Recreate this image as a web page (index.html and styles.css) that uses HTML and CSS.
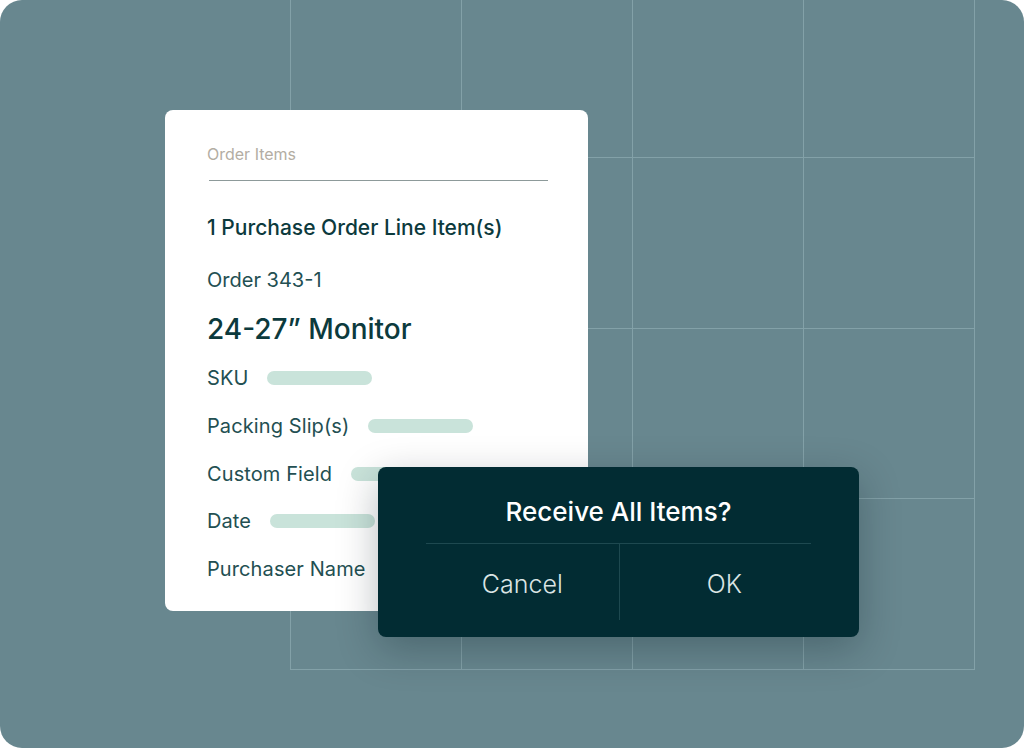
FILE: index.html
```html
<!DOCTYPE html>
<html lang="en">
<head>
<meta charset="utf-8">
<title>Receive All Items</title>
<link rel="stylesheet" href="styles.css">
</head>
<body>
<div class="frame">
  <div class="grid">
    <div class="cell"></div><div class="cell"></div><div class="cell"></div><div class="cell"></div>
    <div class="cell"></div><div class="cell"></div><div class="cell"></div><div class="cell"></div>
    <div class="cell"></div><div class="cell"></div><div class="cell"></div><div class="cell"></div>
    <div class="cell"></div><div class="cell"></div><div class="cell"></div><div class="cell"></div>
  </div>

  <div class="card">
    <div class="card-head">Order Items</div>
    <div class="card-count">1 Purchase Order Line Item(s)</div>
    <div class="card-order">Order 343-1</div>
    <div class="card-title">24-27” Monitor</div>
    <div class="fields">
      <div class="field"><span>SKU</span><span class="pill"></span></div>
      <div class="field"><span>Packing Slip(s)</span><span class="pill"></span></div>
      <div class="field"><span>Custom Field</span><span class="pill"></span></div>
      <div class="field"><span>Date</span><span class="pill"></span></div>
      <div class="field"><span>Purchaser Name</span><span class="pill"></span></div>
    </div>
  </div>

  <div class="dialog">
    <div class="dialog-title">Receive All Items?</div>
    <div class="dialog-actions">
      <div class="action">Cancel</div>
      <div class="action action-ok">OK</div>
    </div>
  </div>
</div>
</body>
</html>
```

FILE: styles.css
```css
* { box-sizing: border-box; }
html, body { margin: 0; padding: 0; background: #ffffff; }
body { font-family: Inter, "Noto Sans", sans-serif; }

.frame {
  position: relative;
  width: 1024px;
  height: 748px;
  background: #68878f;
  border-radius: 22px;
  overflow: hidden;
}

.grid {
  position: absolute;
  left: 290px;
  top: -13px;
  width: 685px;
  height: 683px;
  display: grid;
  grid-template-columns: repeat(4, 1fr);
  grid-template-rows: repeat(4, 1fr);
  border-left: 1px solid #83a1a8;
}
.cell {
  border-right: 1px solid #83a1a8;
  border-bottom: 1px solid #83a1a8;
}

.card {
  position: absolute;
  left: 165px;
  top: 110px;
  width: 423px;
  height: 501px;
  background: #ffffff;
  border-radius: 8px;
  padding: 34px 40px 30px 42px;
  display: flex;
  flex-direction: column;
  color: #234f52;
}
.card-head {
  font-size: 16px;
  line-height: 20px;
  color: #b3ada3;
  padding-bottom: 16px;
  border-bottom: 1px solid #8d9a9a;
  margin-left: 2px;
  text-indent: -2px;
}
.card-count {
  margin-top: 34px;
  font-size: 21px;
  line-height: 26px;
  font-weight: 500;
  color: #0c3a3d;
}
.card-order {
  margin-top: 26px;
  font-size: 20px;
  line-height: 26px;
}
.card-title {
  margin-top: 18px;
  font-size: 28px;
  line-height: 36px;
  font-weight: 500;
  color: #0c3a3d;
}
.fields {
  margin-top: 18px;
  display: flex;
  flex-direction: column;
  gap: 21.75px;
}
.field {
  display: flex;
  align-items: center;
  gap: 19px;
  font-size: 20px;
  line-height: 26px;
  letter-spacing: 0.1px;
}
.pill {
  width: 105px;
  height: 14px;
  border-radius: 7px;
  background: #c9e3da;
}

.dialog {
  position: absolute;
  left: 378px;
  top: 467px;
  width: 481px;
  height: 170px;
  background: #022c33;
  border-radius: 8px;
  box-shadow: 0 12px 40px rgba(0, 20, 30, 0.28);
  padding: 29px 48px 17px;
  display: flex;
  flex-direction: column;
}
.dialog-title {
  font-size: 26px;
  line-height: 32px;
  font-weight: 500;
  color: #ffffff;
  text-align: center;
  padding-bottom: 15px;
  border-bottom: 1px solid #1e4950;
}
.dialog-actions {
  flex: 1;
  display: grid;
  grid-template-columns: 1fr 1fr;
}
.action {
  display: flex;
  align-items: center;
  justify-content: center;
  padding-top: 4px;
  font-size: 25px;
  font-weight: 300;
  color: #dbe5e5;
}
.action + .action {
  border-left: 1px solid #1e4950;
}
.action-ok {
  padding-left: 18px;
}
```
